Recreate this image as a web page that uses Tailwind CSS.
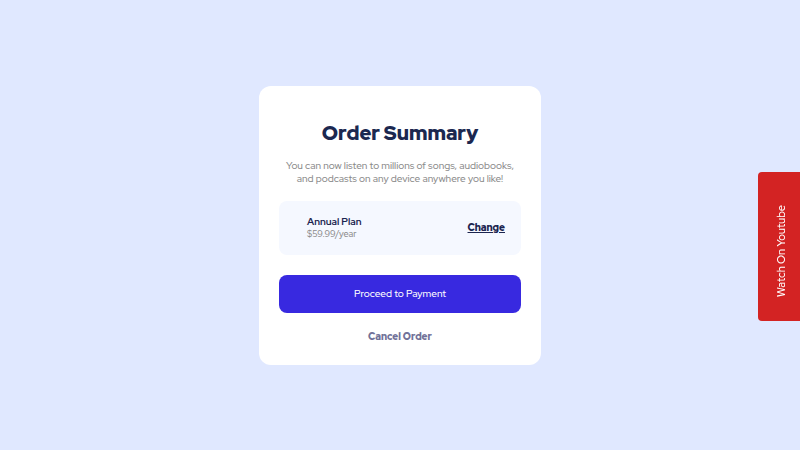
<!DOCTYPE html>
<html lang="en">
<head>
    <meta charset="UTF-8">
    <title>Order Summary</title>
    <meta name="viewport" content="width=device-width, initial-scale=1.0">
    <script src="https://cdn.jsdelivr.net/npm/@tailwindcss/browser@4"></script>
    <style>
        body { font-family: 'Red Hat Display', Lato, 'Open Sans', sans-serif; }
    </style>
</head>
<body class="bg-[#e0e8ff] min-h-screen flex items-center justify-center">

    <main class="w-full max-w-[282px] px-5 pt-[35px] pb-[18px] bg-white rounded-xl text-center">
        <h1 class="text-[20px] leading-6 font-black text-[#1b2850]">Order Summary</h1>
        <p class="mt-[14px] text-[10px] leading-[13px] font-medium text-[#8c8c8c]">You can now listen to millions of songs, audiobooks,<br>and podcasts on any device anywhere you like!</p>

        <section class="mt-4 h-[54px] pl-7 pr-4 flex items-center justify-between bg-[#f5f8ff] rounded-lg">
            <div class="text-left leading-3">
                <h2 class="text-[10px] font-bold text-[#1b2550]">Annual Plan</h2>
                <p class="text-[9px] font-medium text-[#8c8c8c]">$59.99/year</p>
            </div>
            <a href="#" class="text-[10px] font-black text-[#1b2550] underline">Change</a>
        </section>

        <button type="button" class="mt-5 w-full h-[38px] bg-[#3829e0] text-white text-[10px] font-medium rounded-lg">Proceed to Payment</button>
        <button type="button" class="mt-4 text-[10px] leading-4 font-black text-[#717299]">Cancel Order</button>
    </main>

    <a href="#" class="fixed right-0 top-[172px] h-[149px] w-[42px] pt-6 bg-[#d32323] text-white text-[11px] leading-[46px] font-medium rounded-r [writing-mode:vertical-rl] rotate-180">Watch On Youtube</a>
</body>
</html>
